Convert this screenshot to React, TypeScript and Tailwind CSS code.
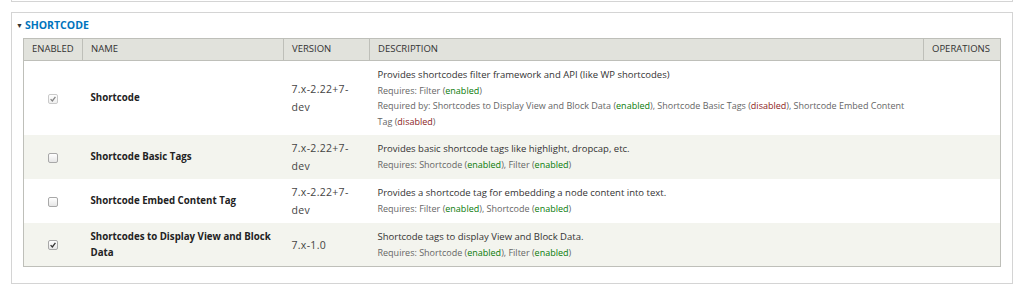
type Dep = { name: string; status: "enabled" | "disabled" };

type Mod = {
  name: string;
  version: string[];
  description: string;
  requires: Dep[];
  requiredBy?: Dep[];
  checked: boolean;
  locked?: boolean;
};

const modules: Mod[] = [
  {
    name: "Shortcode",
    version: ["7.x-2.22+7-", "dev"],
    description: "Provides shortcodes filter framework and API (like WP shortcodes)",
    requires: [{ name: "Filter", status: "enabled" }],
    requiredBy: [
      { name: "Shortcodes to Display View and Block Data", status: "enabled" },
      { name: "Shortcode Basic Tags", status: "disabled" },
      { name: "Shortcode Embed Content Tag", status: "disabled" },
    ],
    checked: true,
    locked: true,
  },
  {
    name: "Shortcode Basic Tags",
    version: ["7.x-2.22+7-", "dev"],
    description: "Provides basic shortcode tags like highlight, dropcap, etc.",
    requires: [
      { name: "Shortcode", status: "enabled" },
      { name: "Filter", status: "enabled" },
    ],
    checked: false,
  },
  {
    name: "Shortcode Embed Content Tag",
    version: ["7.x-2.22+7-", "dev"],
    description: "Provides a shortcode tag for embedding a node content into text.",
    requires: [
      { name: "Filter", status: "enabled" },
      { name: "Shortcode", status: "enabled" },
    ],
    checked: false,
  },
  {
    name: "Shortcodes to Display View and Block Data",
    version: ["7.x-1.0"],
    description: "Shortcode tags to display View and Block Data.",
    requires: [
      { name: "Shortcode", status: "enabled" },
      { name: "Filter", status: "enabled" },
    ],
    checked: true,
  },
];

function DepList({ label, deps }: { label: string; deps: Dep[] }) {
  return (
    <div className="text-[9px] leading-[15.5px] text-[#666]">
      {label}:{" "}
      {deps.map((d, i) => (
        <span key={d.name}>
          {d.name} (
          <span className={d.status === "enabled" ? "text-[#077a07]" : "text-[#8b1d1d]"}>
            {d.status}
          </span>
          ){i < deps.length - 1 ? ", " : ""}
        </span>
      ))}
    </div>
  );
}

function Checkbox({ checked, locked }: { checked: boolean; locked?: boolean }) {
  return (
    <span
      className={`inline-flex h-[10px] w-[10px] items-center justify-center rounded-[2px] border border-[#a8a8a8] bg-gradient-to-b from-white to-[#e6e6e6] align-middle ${
        locked ? "opacity-60" : ""
      }`}
    >
      {checked && (
        <svg viewBox="0 0 10 10" className="h-[8px] w-[8px]">
          <path d="M2 5.2 L4.2 7.4 L8 2.4" fill="none" stroke="#333" strokeWidth="1.6" />
        </svg>
      )}
    </span>
  );
}

export default function App() {
  return (
    <div className="min-h-[295px] bg-white font-['Open_Sans',sans-serif] text-[#333]">
      {/* bottom of the previous fieldset */}
      <div className="mx-[11px] h-[2px] border-x border-b border-[#d4d4d4]" />

      <div className="mx-[11px] mt-[10px] border border-[#d4d4d4] px-[11px] pb-[16px]">
        <div className="-ml-[7px] mb-[4px] mt-[5px] flex h-[16px] items-center gap-[2px] text-[10.5px] font-bold text-[#0074bd]">
          <span className="text-[7px] text-[#333]">▼</span>
          SHORTCODE
        </div>

        <table className="w-full border-collapse border border-[#bebfb9] text-left">
          <thead>
            <tr className="h-[22px] bg-[#e1e2dc] text-[9.5px] text-[#333]">
              <th className="w-[59px] border border-[#bebfb9] px-[8px] font-normal">ENABLED</th>
              <th className="w-[201px] border border-[#bebfb9] px-[8px] font-normal">NAME</th>
              <th className="w-[86px] border border-[#bebfb9] px-[8px] font-normal">VERSION</th>
              <th className="border border-[#bebfb9] px-[8px] font-normal">DESCRIPTION</th>
              <th className="w-[77px] border border-[#bebfb9] px-[8px] font-normal">OPERATIONS</th>
            </tr>
          </thead>
          <tbody>
            {modules.map((m, i) => (
              <tr key={m.name} className={i % 2 === 1 ? "bg-[#f3f4ee]" : "bg-white"}>
                <td className="px-[8px] py-[6px] text-center align-middle leading-[10px]">
                  <Checkbox checked={m.checked} locked={m.locked} />
                </td>
                <td className="px-[8px] py-[6px] align-middle text-[9.7px] font-bold leading-[15.5px] text-[#222]">
                  {m.name}
                </td>
                <td className="px-[8px] py-[4px] align-middle text-[10.5px] leading-[18px] tracking-[0.3px] text-[#444]">
                  {m.version.map((v) => (
                    <div key={v}>{v}</div>
                  ))}
                </td>
                <td className="px-[8px] py-[6px] align-top">
                  <div className="text-[9.5px] leading-[15.5px] text-[#333]">{m.description}</div>
                  <DepList label="Requires" deps={m.requires} />
                  {m.requiredBy && <DepList label="Required by" deps={m.requiredBy} />}
                </td>
                <td className="px-[8px] py-[6px]" />
              </tr>
            ))}
          </tbody>
        </table>
      </div>
    </div>
  );
}
